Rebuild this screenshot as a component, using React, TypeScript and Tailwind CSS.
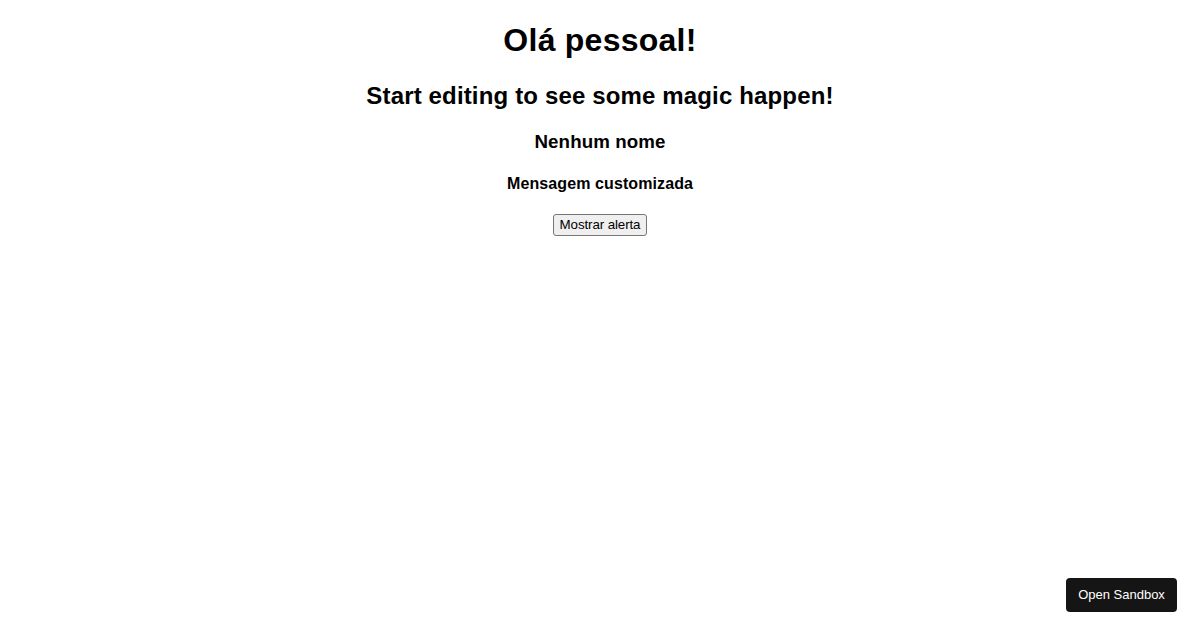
export default function App() {
  return (
    <div className="min-h-screen bg-white text-black text-center font-['Liberation_Sans',Arial,sans-serif]">
      <div className="pt-[22px]">
        <h1 className="text-[32px] font-bold leading-[37px] tracking-[0.25px]">Olá pessoal!</h1>
        <h2 className="mt-[23px] text-[24px] font-bold leading-[28px] tracking-[0.15px]">Start editing to see some magic happen!</h2>
        <h3 className="mt-[21px] text-[18.72px] font-bold leading-[22px] tracking-[0.1px]">Nenhum nome</h3>
        <h4 className="mt-[22px] text-[16px] font-bold leading-[18px] tracking-[0.1px]">Mensagem customizada</h4>
        <div className="mt-[19px]">
          <button className="h-[22px] px-[6px] text-[13.33px] leading-[18px] bg-[#efefef] border border-[#767676] rounded-[3px] tracking-[-0.1px]">
            Mostrar alerta
          </button>
        </div>
      </div>
      <button className="fixed right-[23px] bottom-[18px] w-[111px] h-[34px] rounded-[4px] bg-[#151515] text-white text-[13px]">
        Open Sandbox
      </button>
    </div>
  );
}
